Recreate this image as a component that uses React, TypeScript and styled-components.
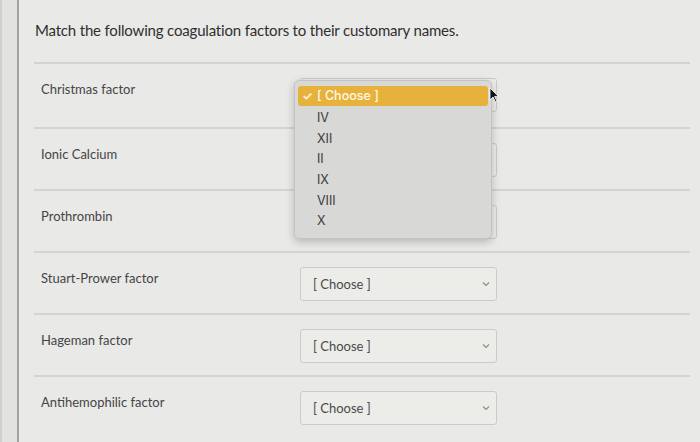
import React from "react";
import styled, { createGlobalStyle } from "styled-components";

const Global = createGlobalStyle`
  html, body { margin: 0; padding: 0; }
  body {
    background: #e7e7e5;
    font-family: Lato, "Open Sans", sans-serif;
    -webkit-font-smoothing: antialiased;
  }
  #root { width: 700px; height: 442px; overflow: hidden; }
`;

const Screen = styled.div`
  display: flex;
  width: 700px;
  height: 442px;
  background: #e9e9e7;
`;

const Gutter = styled.div`
  width: 19px;
  flex: none;
  background: #e2e2e0;
  border-left: 2px solid #cfcfcd;
  box-sizing: border-box;
  border-right: 2px solid #a2a2a0;
`;

const Content = styled.div`
  flex: 1;
  padding: 0 10px 0 15px;
  display: flex;
  flex-direction: column;
`;

const Title = styled.h1`
  margin: 0;
  padding: 20px 0 0 1px;
  height: 62px;
  flex: none;
  box-sizing: border-box;
  font-family: Lato, sans-serif;
  font-weight: 400;
  font-size: 15px;
  line-height: 20px;
  color: #2f2f2f;
  letter-spacing: -0.18px;
`;

const Row = styled.div<{ $h: number }>`
  position: relative;
  flex: none;
  display: grid;
  grid-template-columns: 266px 197px;
  height: ${(p) => p.$h}px;
  border-top: 2px solid #d3d3d1;
  box-sizing: border-box;
`;

const Label = styled.div`
  padding: 17px 0 0 7px;
  font-size: 13px;
  line-height: 16px;
  color: #454545;
`;

const Select = styled.div`
  margin-top: 14px;
  height: 34px;
  box-sizing: border-box;
  border: 1px solid #cbcbc9;
  border-radius: 3px;
  background: #ecece9;
  display: flex;
  align-items: center;
  justify-content: space-between;
  padding: 0 6px 0 12px;
  font-size: 13px;
  color: #4a4a4a;
`;

const Chevron = () => (
  <svg width="8" height="6" viewBox="0 0 8 6">
    <path d="M1 1.5 L4 4.5 L7 1.5" fill="none" stroke="#8a8a8a" strokeWidth="1.1" />
  </svg>
);

const Popup = styled.div`
  position: absolute;
  left: 260px;
  top: 16px;
  width: 198px;
  padding: 5px 3px 6px 3px;
  box-sizing: border-box;
  background: #d8d8d6;
  border: 1px solid #c4c4c2;
  border-radius: 5px;
  box-shadow: 0 3px 8px rgba(0, 0, 0, 0.22);
  font-family: Inter, "Liberation Sans", sans-serif;
  z-index: 5;
`;

const Option = styled.div<{ $active?: boolean }>`
  display: flex;
  align-items: center;
  height: ${(p) => (p.$active ? 20 : 20.6)}px;
  line-height: 14px;
  margin-bottom: ${(p) => (p.$active ? 2 : 0)}px;
  padding-left: 4px;
  border-radius: 3px;
  font-size: 12.5px;
  font-weight: ${(p) => (p.$active ? 500 : 400)};
  color: ${(p) => (p.$active ? "#fff8e6" : "#3a3a3a")};
  background: ${(p) => (p.$active ? "#e7b23c" : "transparent")};
`;

const Check = styled.span`
  flex: none;
  width: 15px;
  font-size: 12px;
  font-weight: 700;
  color: #fff3d6;
`;

const Cursor = styled.svg`
  position: absolute;
  left: 455px;
  top: 23px;
  z-index: 6;
`;

const labels = [
  "Christmas factor",
  "Ionic Calcium",
  "Prothrombin",
  "Stuart-Prower factor",
  "Hageman factor",
  "Antihemophilic factor",
];

const options = ["IV", "XII", "II", "IX", "VIII", "X"];

export default function App() {
  return (
    <>
      <Global />
      <Screen>
        <Gutter />
        <Content>
          <Title>Match the following coagulation factors to their customary names.</Title>
          {labels.map((l, i) => (
            <Row key={l} $h={i === 0 ? 65 : 62}>
              <Label>{l}</Label>
              <Select>
                <span>[ Choose ]</span>
                <Chevron />
              </Select>
              {i === 0 && (
                <>
                  <Popup>
                    <Option $active>
                      <Check>✓</Check>
                      <span>[ Choose ]</span>
                    </Option>
                    {options.map((o) => (
                      <Option key={o}>
                        <Check />
                        <span>{o}</span>
                      </Option>
                    ))}
                  </Popup>
                  <Cursor width="10" height="16" viewBox="0 0 10 16">
                    <path d="M1 1 L1 13 L4 10 L6.5 15 L8 14.3 L5.6 9.4 L9.5 9.4 Z" fill="#111" stroke="#fff" strokeWidth="0.8" />
                  </Cursor>
                </>
              )}
            </Row>
          ))}
        </Content>
      </Screen>
    </>
  );
}
